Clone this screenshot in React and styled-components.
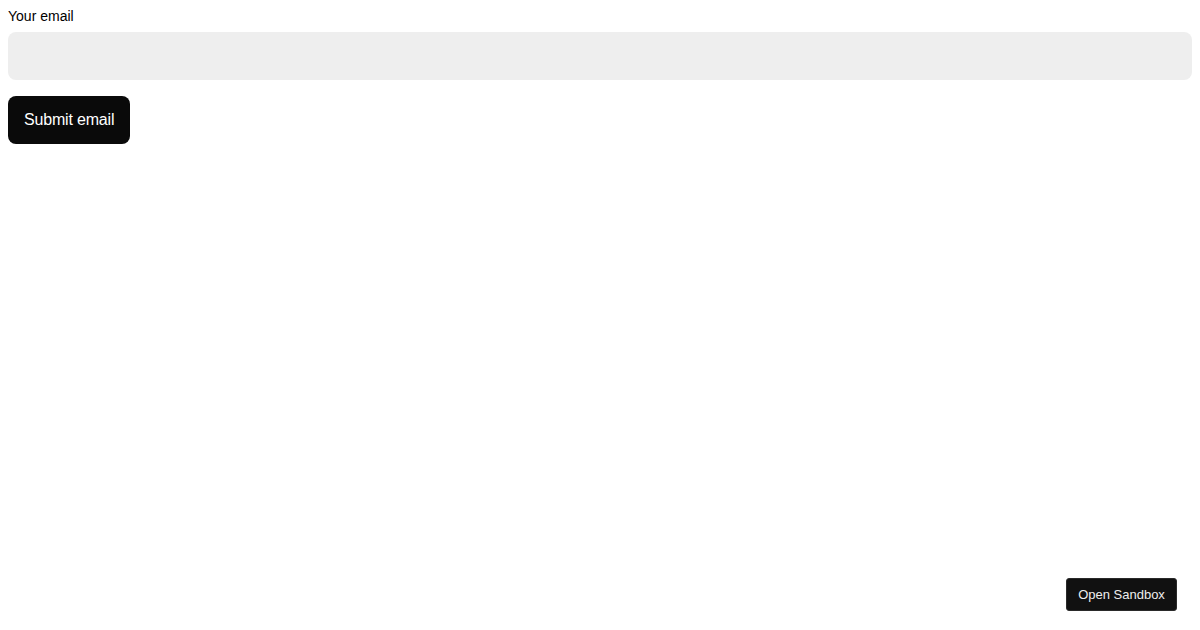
import React from "react";
import styled, { createGlobalStyle } from "styled-components";

const Global = createGlobalStyle`
  html, body { margin: 0; padding: 0; background: #fff; }
  body { margin: 8px; font-family: "Liberation Sans", Arial, sans-serif; }
`;

const Form = styled.form`
  display: flex;
  flex-direction: column;
  align-items: flex-start;
`;

const Label = styled.label`
  font-size: 14px;
  line-height: 16px;
  color: #000;
  margin-bottom: 8px;
`;

const Input = styled.input`
  box-sizing: border-box;
  width: 100%;
  height: 48px;
  border: none;
  border-radius: 8px;
  background: #eeeeee;
  padding: 0 16px;
  font-size: 16px;
  font-family: inherit;
  outline: none;
  margin-bottom: 16px;
`;

const Button = styled.button`
  box-sizing: border-box;
  height: 48px;
  padding: 0 16px;
  border: none;
  border-radius: 8px;
  background: #0a0a0a;
  color: #fff;
  font-family: "Liberation Sans", Arial, sans-serif;
  font-size: 16px;
  letter-spacing: -0.18px;
  cursor: pointer;
`;

const SandboxButton = styled.button`
  position: fixed;
  right: 23px;
  bottom: 19px;
  box-sizing: border-box;
  width: 111px;
  height: 33px;
  border: 1px solid #2a2a2a;
  border-radius: 3px;
  background: #111;
  color: #eee;
  font-family: "Liberation Sans", Arial, sans-serif;
  font-size: 13px;
  padding: 0;
`;

export default function App() {
  return (
    <>
      <Global />
      <Form onSubmit={(e) => e.preventDefault()}>
        <Label htmlFor="email">Your email</Label>
        <Input id="email" type="email" />
        <Button type="submit">Submit email</Button>
      </Form>
      <SandboxButton>Open Sandbox</SandboxButton>
    </>
  );
}
